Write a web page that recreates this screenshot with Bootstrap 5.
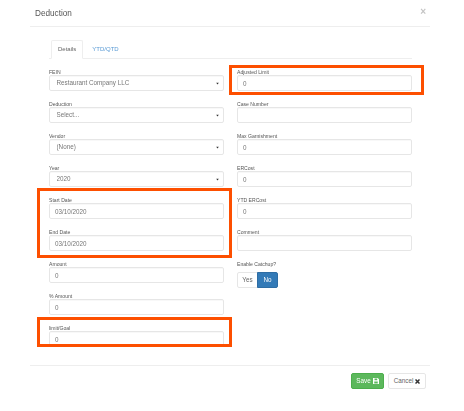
<!DOCTYPE html>
<html lang="en">
<head>
<meta charset="utf-8">
<title>Deduction</title>
<link href="https://cdn.jsdelivr.net/npm/bootstrap@5.3.0/dist/css/bootstrap.min.css" rel="stylesheet">
<style>
html,body{margin:0;background:#fff;}
body{font-family:"Liberation Sans",Arial,sans-serif;color:#555;width:464px;height:411px;overflow:hidden;position:relative;}
.dlg{margin-left:30px;width:400px;height:411px;filter:blur(.35px);}
.dlg-head{height:27px;border-bottom:1px solid #eee;padding:0 4px 0 5px;}
.dlg-title{font-size:8.2px;line-height:28px;color:#555;margin:0;font-weight:400;}
.dlg-close{font-size:10px;line-height:1;color:#c4c4c4;font-weight:700;margin-top:7px;}
.dlg-body{padding:13px 18px 0 19px;height:339px;border-bottom:1px solid #eee;}
.tabbar{border-bottom:1px solid #eee;height:19px;margin-left:0;}
.tabbar .nav-link{font-size:6px;height:19px;line-height:17px;padding:0 6px;border:1px solid transparent;border-radius:2px 2px 0 0;color:#5a9bd5;margin:0 2px 0 0;}
.tabbar .nav-item:first-child .nav-link{margin-left:2px;}
.tabbar .nav-link.active{color:#666;background:#fff;border-color:#eee #eee #fff;}
.cols{display:grid;grid-template-columns:175px 175px;column-gap:13px;margin-top:9px;}
.fld{height:32px;}
.fld label{display:block;font-size:5.1px;line-height:8px;height:7px;margin:0;color:#555;}
.fld .form-control,.fld .form-select{height:16px;min-height:0;font-size:6.3px;line-height:14px;padding:0 5px;border:1px solid #e6e6e6;border-radius:2px;color:#777;box-shadow:inset 0 1px 1px rgba(0,0,0,.03);background-color:#fff;}
.fld .form-select{padding-left:6.5px;background-size:7px 5px;background-position:right 2px center;background-image:url("data:image/svg+xml,%3csvg xmlns='http://www.w3.org/2000/svg' viewBox='0 0 8 6'%3e%3cpath fill='%23333' d='M2.4 2h3.2L4 4.2z'/%3e%3c/svg%3e");}
.yn .btn{font-size:6.3px;line-height:14px;height:16px;width:21px;padding:0;border-radius:2px;border:1px solid #e6e6e6;color:#666;background:#fff;}
.yn .btn.on{background:#337ab7;border-color:#2e6da4;color:#fff;}
.dlg-foot{padding:7px 4px 0 0;gap:4px;}
.dlg-foot .btn{font-size:6.3px;height:16px;line-height:14px;padding:0;border-radius:2px;display:flex;align-items:center;justify-content:center;gap:2px;}
.btn-keep{width:33px;background:#5cb85c;border:1px solid #4cae4c;color:#fff;}
.btn-stop{width:38px;background:#fff;border:1px solid #e6e6e6;color:#666;}
.mark-box{position:absolute;border:3px solid #fd4f00;pointer-events:none;}
</style>
</head>
<body>
<div class="dlg">
  <div class="dlg-head d-flex justify-content-between align-items-start">
    <h5 class="dlg-title">Deduction</h5>
    <span class="dlg-close">&#215;</span>
  </div>
  <div class="dlg-body">
    <ul class="nav nav-tabs tabbar">
      <li class="nav-item"><a class="nav-link active" href="#">Details</a></li>
      <li class="nav-item"><a class="nav-link" href="#">YTD/QTD</a></li>
    </ul>
    <div class="cols">
      <div>
        <div class="fld"><label>FEIN</label><select class="form-select"><option>Restaurant Company LLC</option></select></div>
        <div class="fld"><label>Deduction</label><select class="form-select"><option>Select...</option></select></div>
        <div class="fld"><label>Vendor</label><select class="form-select"><option>(None)</option></select></div>
        <div class="fld"><label>Year</label><select class="form-select"><option>2020</option></select></div>
        <div class="fld"><label>Start Date</label><input class="form-control" value="03/10/2020"></div>
        <div class="fld"><label>End Date</label><input class="form-control" value="03/10/2020"></div>
        <div class="fld"><label>Amount</label><input class="form-control" value="0"></div>
        <div class="fld"><label>% Amount</label><input class="form-control" value="0"></div>
        <div class="fld"><label>limit/Goal</label><input class="form-control" value="0"></div>
      </div>
      <div>
        <div class="fld"><label>Adjusted Limit</label><input class="form-control" value="0"></div>
        <div class="fld"><label>Case Number</label><input class="form-control"></div>
        <div class="fld"><label>Max Garnishment</label><input class="form-control" value="0"></div>
        <div class="fld"><label>ERCost</label><input class="form-control" value="0"></div>
        <div class="fld"><label>YTD ERCost</label><input class="form-control" value="0"></div>
        <div class="fld"><label>Comment</label><input class="form-control"></div>
        <div class="fld yn"><label>Enable Catchup?</label>
          <div class="btn-group"><button class="btn">Yes</button><button class="btn on">No</button></div>
        </div>
      </div>
    </div>
  </div>
  <div class="dlg-foot d-flex justify-content-end">
    <button class="btn btn-keep">Save
      <svg width="6" height="6" viewBox="0 0 12 12"><path fill="#fff" fill-rule="evenodd" d="M0 0h9.5L12 2.5V12H0zM3 1v3.5h5.5V1zM2.5 7v4h7V7z"/></svg>
    </button>
    <button class="btn btn-stop">Cancel
      <svg width="5" height="5" viewBox="0 0 10 10"><path stroke="#333" stroke-width="3" d="M1 1l8 8M9 1l-8 8"/></svg>
    </button>
  </div>
</div>
<div class="mark-box" style="left:229px;top:65px;width:195px;height:30px"></div>
<div class="mark-box" style="left:37px;top:188px;width:195px;height:70px"></div>
<div class="mark-box" style="left:37px;top:317px;width:195px;height:30px"></div>
</body>
</html>
